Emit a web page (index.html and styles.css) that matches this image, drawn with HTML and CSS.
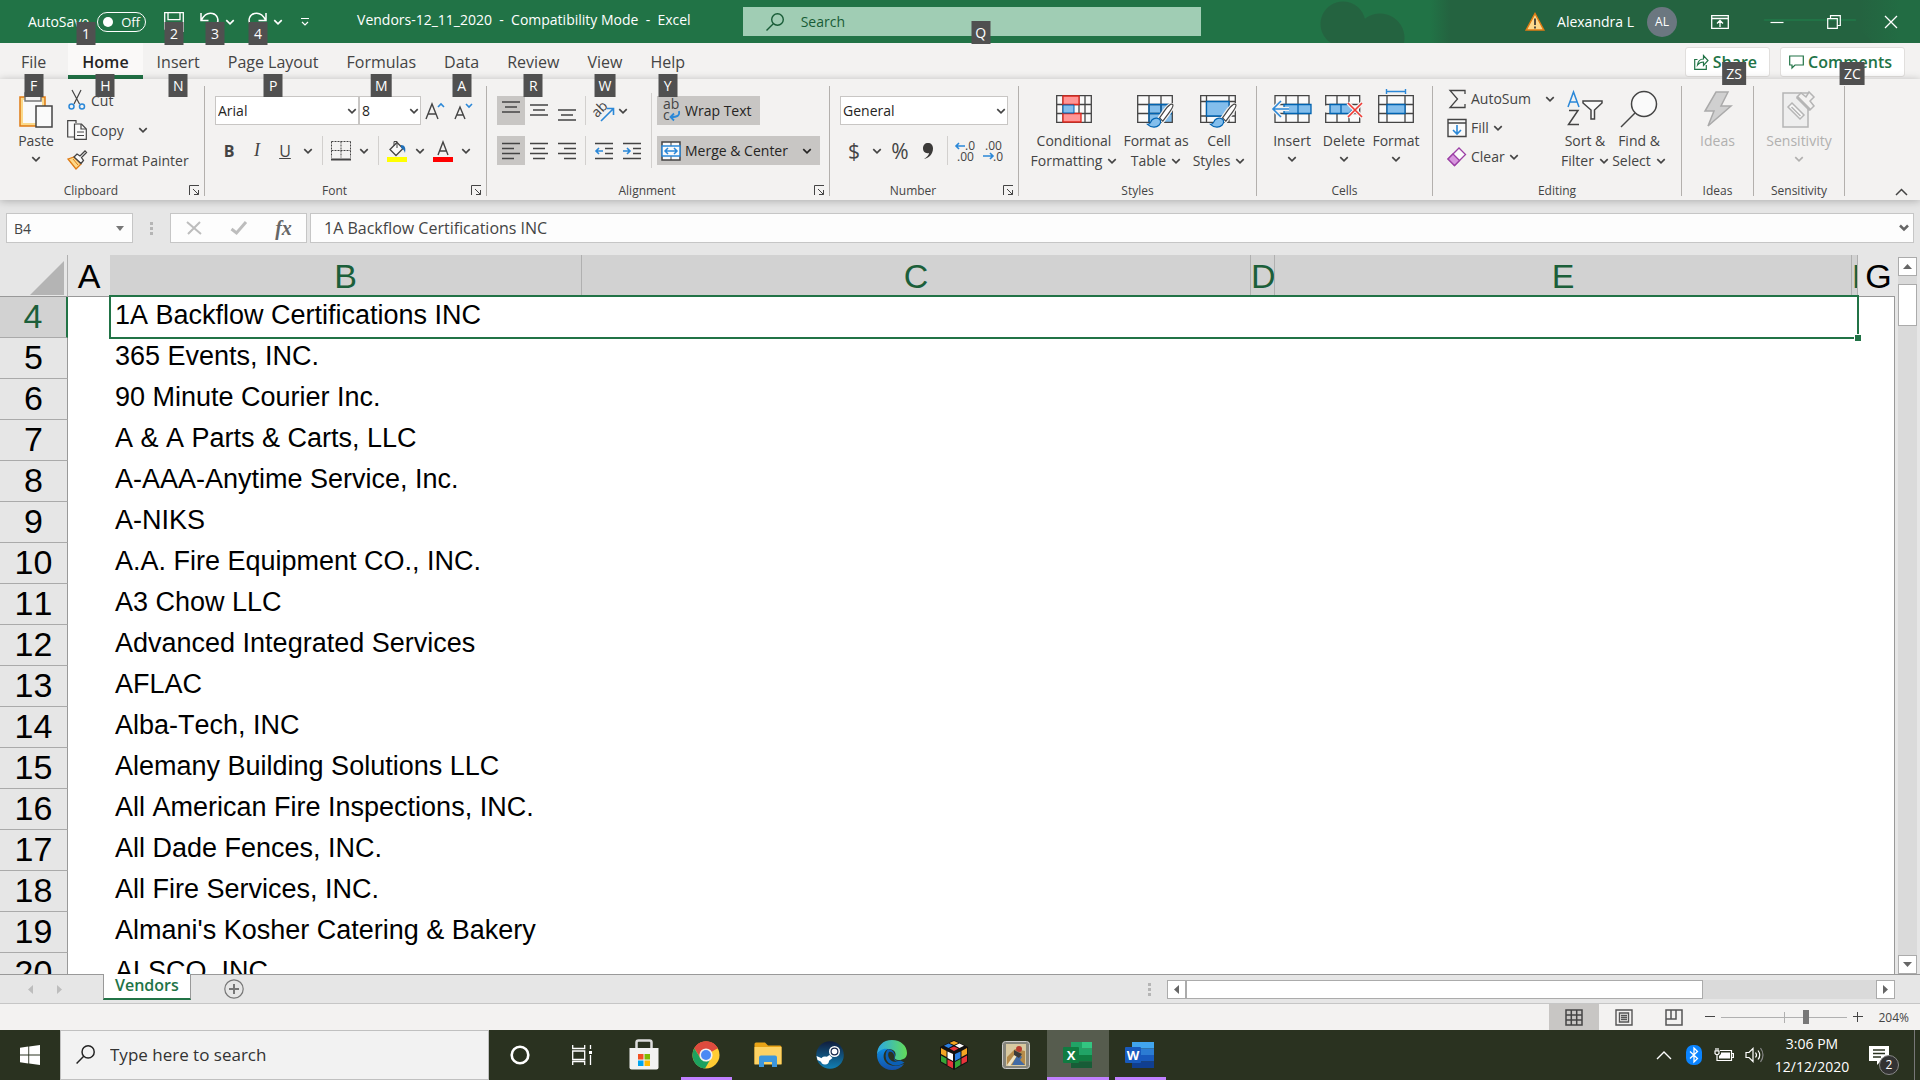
FILE: index.html
```html
<!DOCTYPE html>
<html lang="en">
<head>
    <meta charset="UTF-8">
    <meta name="viewport" content="width=device-width, initial-scale=1.0">
    <title>Vendors-12_11_2020 - Compatibility Mode - Excel</title>
    <link rel="stylesheet" href="styles.css">
</head>
<body>
    <!-- shared icons -->
    <svg class="defs" width="0" height="0">
        <symbol id="chev" viewBox="0 0 8 8"><path d="M1 2.5l3 3 3-3" fill="none" stroke="currentColor" stroke-width="1.3"/></symbol>
        <symbol id="launch" viewBox="0 0 11 11"><path d="M.5 10V.5H10M4 4l5.500 5.500M9.500 5v4.500H5" fill="none" stroke="currentColor"/></symbol>
        <symbol id="glass" viewBox="0 0 20 20"><circle cx="12.500" cy="7.500" r="5.800" fill="none" stroke="currentColor" stroke-width="1.400"/><path d="M8.300 11.700L1.500 18.500" stroke="currentColor" stroke-width="1.400"/></symbol>
        <symbol id="brush" viewBox="0 0 30 28"><path d="M28 1.500c-2-1-5 2-8 6l-6 8.500 3.500 3.500 7-9.500c3-4 5-7 3.500-8.500z" fill="#fff" stroke="#f3f2f1" stroke-width="4"/><path d="M28 1.500c-2-1-5 2-8 6l-6 8.500 3.500 3.500 7-9.500c3-4 5-7 3.500-8.500z" fill="#fff" stroke="#444" stroke-width="1.300"/><path d="M1 23c4 0 3-3 5-5 3-3 8-2 9 1 1 4-3 7-7 7-3 0-5-1-7-3z" fill="#83beec" stroke="#0063b1" stroke-width="1.300"/></symbol>
    </svg>

    <header class="titlebar">
        <label class="autosave tip-host">AutoSave
            <span class="switch"><input type="checkbox">Off</span>
            <kbd class="tip tip-autosave">1</kbd>
        </label>
        <div class="quick">
            <button class="tip-host" aria-label="Save">
                <svg width="20" height="20" viewBox="0 0 20 20" fill="none" stroke="#fff" stroke-width="1.300"><path d="M.7.7h18.600v18.600H3L.7 17zM4 .7v7h12v-7M5 19v-7h10v7"/></svg>
                <kbd class="tip">2</kbd>
            </button>
            <button class="tip-host undo" aria-label="Undo">
                <svg width="20" height="20" viewBox="0 0 20 20" fill="none" stroke="#fff" stroke-width="1.500"><path d="M1 1v7.500h7.500M1.500 8C4 3 8 .5 12.500 1.500c5 1 7 7 4 11L10 19"/></svg>
                <kbd class="tip">3</kbd>
            </button>
            <button class="mini" aria-label="Undo list"><svg class="chev"><use href="#chev"/></svg></button>
            <button class="tip-host redo" aria-label="Redo">
                <svg width="20" height="20" viewBox="0 0 20 20" fill="none" stroke="#fff" stroke-width="1.500"><path d="M18 1v7.500h-7.500M17.500 8C15 3 11 .5 6.500 1.500c-5 1-7 7-4 11L9 19"/></svg>
                <kbd class="tip">4</kbd>
            </button>
            <button class="mini" aria-label="Redo list"><svg class="chev"><use href="#chev"/></svg></button>
            <button class="customize" aria-label="Customize toolbar"><svg width="10" height="10" viewBox="0 0 10 10" fill="none" stroke="#fff" stroke-width="1.200"><path d="M1 1.500h8M2 5l3 3 3-3"/></svg></button>
        </div>
        <h1 class="doc-title">Vendors-12_11_2020&nbsp; -&nbsp; Compatibility Mode&nbsp; -&nbsp; Excel</h1>
        <div class="search tip-host">
            <svg width="20" height="20"><use href="#glass"/></svg>
            <input type="text" placeholder="Search" aria-label="Search">
            <kbd class="tip tip-search">Q</kbd>
        </div>
        <div class="account">
            <svg width="20" height="20" viewBox="0 0 20 20"><path d="M10 1.500L18.800 18H1.200z" fill="#fcd98c" stroke="#e07b13" stroke-width="1.500"/><path d="M10 6.500v6.500M10 14.500v2" stroke="#333" stroke-width="1.700"/></svg>
            <span class="user">Alexandra L</span>
            <span class="avatar">AL</span>
        </div>
        <div class="window-buttons">
            <button aria-label="Ribbon display options"><svg width="18" height="14" viewBox="0 0 18 14" fill="none" stroke="#fff" stroke-width="1.300"><path d="M.7.7h16.600v12.600H.7zM.7 3.500h16.600M9 12V6M6 8.500l3-3 3 3"/></svg></button>
            <button aria-label="Minimize"><svg width="14" height="14" viewBox="0 0 14 14" stroke="#fff" stroke-width="1.200"><path d="M.5 7.500h13"/></svg></button>
            <button aria-label="Restore"><svg width="14" height="14" viewBox="0 0 14 14" fill="none" stroke="#fff" stroke-width="1.200"><path d="M.7 3.700h9.600v9.600H.7zM3.500 3.500V.7h9.800v9.800h-2.800"/></svg></button>
            <button aria-label="Close"><svg width="14" height="14" viewBox="0 0 14 14" stroke="#fff" stroke-width="1.300"><path d="M1 1l12 12M13 1L1 13"/></svg></button>
        </div>
    </header>

    <nav class="tabs">
        <button class="tip-host file">File<kbd class="tip">F</kbd></button>
        <button class="tip-host active">Home<kbd class="tip">H</kbd></button>
        <button class="tip-host">Insert<kbd class="tip">N</kbd></button>
        <button class="tip-host">Page Layout<kbd class="tip">P</kbd></button>
        <button class="tip-host">Formulas<kbd class="tip">M</kbd></button>
        <button class="tip-host">Data<kbd class="tip">A</kbd></button>
        <button class="tip-host">Review<kbd class="tip">R</kbd></button>
        <button class="tip-host">View<kbd class="tip">W</kbd></button>
        <button class="tip-host">Help<kbd class="tip">Y</kbd></button>
        <div class="tab-actions">
            <button class="tip-host">
                <svg width="15" height="16" viewBox="0 0 15 16" fill="none" stroke="#217346" stroke-width="1.200"><path d="M3.500 5.500H.7v9.800h11.600V11M3.500 11C4 7 6 5 9.500 5V1.500L14 6.500l-4.500 5V8C7 8 5 9 3.500 11z"/></svg>
                Share<kbd class="tip">ZS</kbd>
            </button>
            <button class="tip-host">
                <svg width="15" height="16" viewBox="0 0 15 16" fill="none" stroke="#217346" stroke-width="1.200"><path d="M.7 2h13.600v9H6l-3 3v-3H.7z"/></svg>
                Comments<kbd class="tip">ZC</kbd>
            </button>
        </div>
    </nav>

    <section class="ribbon">
        <div class="group g-clipboard">
            <div class="group-body">
                <button class="big w-paste">
                    <span class="big-icon"><svg width="36" height="36" viewBox="0 0 36 36"><path d="M2 6h25v29H2z" fill="#fbd98a" stroke="#e07b13" stroke-width="1.500"/><path d="M5 9h19v23H5z" fill="#fafafa"/><path d="M7 2h16v8H7z" fill="#f3f2f1" stroke="#777" stroke-width="1.500"/><path d="M18 15h16v21H18z" fill="#fafafa" stroke="#444" stroke-width="1.500"/></svg></span>
                    Paste<svg class="chev"><use href="#chev"/></svg>
                </button>
                <div class="small-list">
                    <button><svg width="20" height="20" viewBox="0 0 20 20" fill="none" stroke="#444" stroke-width="1.200"><path d="M5 0l7.500 14M14 0L7 14"/><circle cx="4.500" cy="16.500" r="2.500" stroke="#2b88d8" stroke-width="1.500"/><circle cx="15" cy="16.500" r="2.500" stroke="#2b88d8" stroke-width="1.500"/></svg>Cut</button>
                    <button><svg width="20" height="20" viewBox="0 0 20 20" fill="#fafafa" stroke="#444" stroke-width="1.200"><path d="M7 17H.7V.7H9V3M7.500 4h7L19.300 9v10.300H7.500z"/><path d="M14 4v5h5M10 12h7M10 15.500h7" fill="none"/></svg>Copy<svg class="chev far"><use href="#chev"/></svg></button>
                    <button><svg width="20" height="20" viewBox="0 0 20 20"><path d="M1 9l6-2 7 7-5 5z" fill="#fcd98c" stroke="#e07b13" stroke-width="1.300"/><path d="M3 12l4 4M6 9l5 6" stroke="#e07b13"/><path d="M7 7l3-3 3 2 5-5 1.500 1.500-5 5 2 3-2.500 3z" fill="#fafafa" stroke="#444" stroke-width="1.300"/></svg>Format Painter</button>
                </div>
            </div>
            <div class="group-label has-launch">Clipboard<button class="launch" aria-label="Clipboard settings"><svg width="11" height="11"><use href="#launch"/></svg></button></div>
        </div>

        <div class="group g-font">
            <div class="group-body rows">
                <div class="row">
                    <span class="combo font-name"><select aria-label="Font"><option>Arial</option></select><svg class="chev"><use href="#chev"/></svg></span>
                    <span class="combo font-size"><select aria-label="Font size"><option>8</option></select><svg class="chev"><use href="#chev"/></svg></span>
                    <button class="ib" aria-label="Increase font size"><svg width="20" height="20" viewBox="0 0 20 20" fill="none"><path d="M1 18L7 3l6 15M3 13h8" stroke="#444" stroke-width="1.400"/><path d="M13 6l3-3 3 3" stroke="#2b88d8" stroke-width="1.600"/></svg></button>
                    <button class="ib" aria-label="Decrease font size"><svg width="20" height="20" viewBox="0 0 20 20" fill="none"><path d="M2 18L7 6l5 12M4 14h6" stroke="#444" stroke-width="1.400"/><path d="M13 3l3 3 3-3" stroke="#2b88d8" stroke-width="1.600"/></svg></button>
                </div>
                <div class="row">
                    <button class="ib glyph"><b>B</b></button>
                    <button class="ib glyph"><i>I</i></button>
                    <button class="ib glyph"><u>U</u></button>
                    <button class="drop" aria-label="Underline styles"><svg class="chev"><use href="#chev"/></svg></button>
                    <span class="vsep"></span>
                    <button class="ib" aria-label="Borders"><svg width="20" height="20" viewBox="0 0 20 20" fill="none" stroke="#444"><path d="M.5.500h19M.5 9.500h19M.5.500v16M10 .5v16M19.500.500v16" stroke-dasharray="2 1"/><path d="M0 18.500h20" stroke-width="2"/></svg></button>
                    <button class="drop" aria-label="Border styles"><svg class="chev"><use href="#chev"/></svg></button>
                    <span class="vsep"></span>
                    <button class="ib" aria-label="Fill color"><svg width="22" height="22" viewBox="0 0 22 22"><path d="M4 9.500L11 2.500l6 6-7 7z" fill="#fafafa" stroke="#444" stroke-width="1.300"/><path d="M8 6V1.500h3V8" fill="none" stroke="#444"/><path d="M15 5c4 0 5 3 4 8-1-3-2-4-4-5z" fill="#1f6fb8"/><path d="M1 17h20v5H1z" fill="#ff0"/></svg></button>
                    <button class="drop" aria-label="Fill colors"><svg class="chev"><use href="#chev"/></svg></button>
                    <button class="ib" aria-label="Font color"><svg width="22" height="22" viewBox="0 0 22 22"><path d="M6 15l5-13 5 13M7.500 11h7" fill="none" stroke="#444" stroke-width="1.400"/><path d="M1 17h20v5H1z" fill="red"/></svg></button>
                    <button class="drop" aria-label="Font colors"><svg class="chev"><use href="#chev"/></svg></button>
                </div>
            </div>
            <div class="group-label has-launch">Font<button class="launch" aria-label="Font settings"><svg width="11" height="11"><use href="#launch"/></svg></button></div>
        </div>

        <div class="group g-align">
            <div class="group-body">
                <div class="rows">
                    <div class="row">
                        <button class="ib on" aria-label="Top align"><svg width="18" height="20" viewBox="0 0 18 20" stroke="#444" stroke-width="1.400"><path d="M0 1h18M3 6h12M0 11h18"/></svg></button>
                        <button class="ib" aria-label="Middle align"><svg width="18" height="20" viewBox="0 0 18 20" stroke="#444" stroke-width="1.400"><path d="M0 4h18M3 9h12M0 14h18"/></svg></button>
                        <button class="ib" aria-label="Bottom align"><svg width="18" height="20" viewBox="0 0 18 20" stroke="#444" stroke-width="1.400"><path d="M0 9h18M3 14h12M0 19h18"/></svg></button>
                        <span class="vsep tight"></span>
                        <button class="ib" aria-label="Orientation"><svg width="22" height="22" viewBox="0 0 22 22"><text x="0" y="15" transform="rotate(-45 6 12)" class="icon-text large">ab</text><path d="M8 21L20 9M14 8.500h6.500V15" fill="none" stroke="#2b88d8" stroke-width="1.600"/></svg></button>
                        <button class="drop narrow" aria-label="Orientation list"><svg class="chev"><use href="#chev"/></svg></button>
                    </div>
                    <div class="row">
                        <button class="ib on" aria-label="Align left"><svg width="18" height="18" viewBox="0 0 18 18" stroke="#444" stroke-width="1.400"><path d="M0 1.500h18M0 6.500h12M0 11.500h18M0 16.500h12"/></svg></button>
                        <button class="ib" aria-label="Center"><svg width="18" height="18" viewBox="0 0 18 18" stroke="#444" stroke-width="1.400"><path d="M0 1.500h18M3 6.500h12M0 11.500h18M3 16.500h12"/></svg></button>
                        <button class="ib" aria-label="Align right"><svg width="18" height="18" viewBox="0 0 18 18" stroke="#444" stroke-width="1.400"><path d="M0 1.500h18M6 6.500h12M0 11.500h18M6 16.500h12"/></svg></button>
                        <span class="vsep tight"></span>
                        <button class="ib" aria-label="Decrease indent"><svg width="18" height="18" viewBox="0 0 18 18" fill="none" stroke="#444" stroke-width="1.400"><path d="M0 1.500h18M10 6.500h8M10 11.500h8M0 16.500h18"/><path d="M8 9H1M4 6L1 9l3 3" stroke="#2b88d8" stroke-width="1.600"/></svg></button>
                        <button class="ib" aria-label="Increase indent"><svg width="18" height="18" viewBox="0 0 18 18" fill="none" stroke="#444" stroke-width="1.400"><path d="M0 1.500h18M10 6.500h8M10 11.500h8M0 16.500h18"/><path d="M0 9h7M4 6l3 3-3 3" stroke="#2b88d8" stroke-width="1.600"/></svg></button>
                    </div>
                </div>
                <span class="vsep long"></span>
                <div class="rows">
                    <div class="row"><button class="labelled on"><svg width="20" height="22" viewBox="0 0 20 22"><text x="2" y="9" class="icon-text large">ab</text><text x="2" y="20" class="icon-text large">c</text><path d="M18 11c1 5-2 6-8 6M13 13.500L9.500 17l3.500 3.500" fill="none" stroke="#2b88d8" stroke-width="1.800"/></svg>Wrap Text</button></div>
                    <div class="row"><button class="labelled on"><svg width="20" height="20" viewBox="0 0 20 20"><path d="M1 1h18v18H1z" fill="#fafafa" stroke="#444" stroke-width="1.500"/><path d="M10 1v18" stroke="#444"/><path d="M1 5h18v10H1z" fill="#fafafa" stroke="#2b88d8" stroke-width="1.500"/><path d="M4 10h12M7 7l-3 3 3 3M13 7l3 3-3 3" fill="none" stroke="#2b88d8" stroke-width="1.500"/></svg>Merge &amp; Center<svg class="chev"><use href="#chev"/></svg></button></div>
                </div>
            </div>
            <div class="group-label has-launch">Alignment<button class="launch" aria-label="Alignment settings"><svg width="11" height="11"><use href="#launch"/></svg></button></div>
        </div>

        <div class="group g-number">
            <div class="group-body rows">
                <div class="row"><span class="combo number-format"><select aria-label="Number format"><option>General</option></select><svg class="chev"><use href="#chev"/></svg></span></div>
                <div class="row">
                    <button class="ib sign">$</button>
                    <button class="drop" aria-label="Currency list"><svg class="chev"><use href="#chev"/></svg></button>
                    <button class="ib sign">%</button>
                    <button class="ib" aria-label="Comma style"><svg width="12" height="18" viewBox="0 0 12 18"><path d="M6 1c3 0 5 2 5 5.500C11 12 7 16 2 17c3-2 5-4 5-6-4 1-6-2-6-4.500C1 3 3 1 6 1z" fill="#3b3a39"/></svg></button>
                    <span class="vsep"></span>
                    <button class="ib" aria-label="Increase decimal"><svg width="22" height="22" viewBox="0 0 22 22"><text x="10" y="10" class="icon-text">.0</text><text x="2" y="21" class="icon-text">.00</text><path d="M10 6H1M4 3L1 6l3 3" fill="none" stroke="#2b88d8" stroke-width="1.600"/></svg></button>
                    <button class="ib" aria-label="Decrease decimal"><svg width="22" height="22" viewBox="0 0 22 22"><text x="2" y="10" class="icon-text">.00</text><text x="10" y="21" class="icon-text">.0</text><path d="M0 16h10M7 13l3 3-3 3" fill="none" stroke="#2b88d8" stroke-width="1.600"/></svg></button>
                </div>
            </div>
            <div class="group-label has-launch">Number<button class="launch" aria-label="Number settings"><svg width="11" height="11"><use href="#launch"/></svg></button></div>
        </div>

        <div class="group g-styles">
            <div class="group-body">
                <button class="big w-cond">
                    <span class="big-icon"><svg width="36" height="28" viewBox="0 0 36 28"><path d="M.7.700h34.600v26.600H.7zM.7 9.500h34.600M.7 18.500h34.600M7 .7v26.600M23 .7v26.600M29 .7v26.600" fill="#fafafa" stroke="#444" stroke-width="1.300"/><path d="M7 1h16v8.500H7zM7 18.500h18V27H7z" fill="#ff9696" stroke="#e0281e" stroke-width="1.300"/><path d="M7 10h11v8H7z" fill="#83beec" stroke="#0063b1"/></svg></span>
                    Conditional<span>Formatting <svg class="chev"><use href="#chev"/></svg></span>
                </button>
                <button class="big w-table">
                    <span class="big-icon"><svg width="38" height="36" viewBox="0 -4 38 36"><path d="M.7.700h34.600v26.600H.7z" fill="#fafafa"/><path d="M12 9.500h23V27H12z" fill="#83beec"/><path d="M.7.700h34.600v26.600H.7zM.7 9.500h34.600M.7 18.500h34.600M12 .7v26.600M24 .7v26.600" fill="none" stroke="#444" stroke-width="1.300"/><path d="M12 27V9.500h23M24 10v17M12 18.500h23" fill="none" stroke="#0063b1" stroke-width="1.300"/><use href="#brush" x="9" y="8" width="29" height="26"/></svg></span>
                    Format as<span>Table <svg class="chev"><use href="#chev"/></svg></span>
                </button>
                <button class="big w-cell">
                    <span class="big-icon"><svg width="38" height="36" viewBox="0 -4 38 36"><path d="M.7.700h34.600v26.600H.7zM.7 6.500h34.600M.7 21h34.600M6.500.700v26.600M29 .7v26.600" fill="#fafafa" stroke="#444" stroke-width="1.300"/><path d="M6.500 6.500H29V21H6.500z" fill="#83beec" stroke="#0063b1" stroke-width="1.300"/><use href="#brush" x="9" y="8" width="29" height="26"/></svg></span>
                    Cell<span>Styles <svg class="chev"><use href="#chev"/></svg></span>
                </button>
            </div>
            <div class="group-label">Styles</div>
        </div>

        <div class="group g-cells">
            <div class="group-body">
                <button class="big w-cells">
                    <span class="big-icon"><svg width="40" height="28" viewBox="0 0 40 28"><path d="M3 .7h34v26.600H3zM14 .7v26.600M26 .7v26.600M3 9.500h34M3 18.500h34" fill="#fafafa" stroke="#444" stroke-width="1.300"/><path d="M12 9.500h27v9H12zM26 9.500v9" fill="#83beec" stroke="#0063b1" stroke-width="1.300"/><path d="M17 14H1M9 6l-8 8 8 8" fill="none" stroke="#f3f2f1" stroke-width="4"/><path d="M17 14H1M9 6l-8 8 8 8" fill="none" stroke="#2b88d8" stroke-width="1.600"/></svg></span>
                    Insert<svg class="chev"><use href="#chev"/></svg>
                </button>
                <button class="big w-cells">
                    <span class="big-icon"><svg width="38" height="28" viewBox="0 0 38 28"><path d="M.7.700h34v26.600h-34zM12 .7v26.600M24 .7v26.600M.7 9.500h34M.7 18.500h34" fill="#fafafa" stroke="#444" stroke-width="1.300"/><path d="M0 10.500h6v7H0z" fill="#f3f2f1"/><path d="M5 9.500h19l4 4.500-4 4.500H5zM16 9.500v9" fill="#83beec" stroke="#0063b1" stroke-width="1.300"/><path d="M23 8l14 14M37 8L23 22" stroke="#f3f2f1" stroke-width="4"/><path d="M23 8l14 14M37 8L23 22" stroke="#f03a34" stroke-width="1.600"/></svg></span>
                    Delete<svg class="chev"><use href="#chev"/></svg>
                </button>
                <button class="big w-cells">
                    <span class="big-icon"><svg width="36" height="40" viewBox="0 0 36 40"><path d="M8 2.500h20M8.500 0v5M27.500 0v5" stroke="#2b88d8" stroke-width="1.400"/><path d="M.7 6.700h34.600v26.600H.7zM9 6.700v26.600M27 6.700v26.600M.7 15.500h34.600M.7 24.500h34.600" fill="#fafafa" stroke="#444" stroke-width="1.300"/><path d="M9 15.500h18v9H9z" fill="#83beec" stroke="#0063b1" stroke-width="1.300"/></svg></span>
                    Format<svg class="chev"><use href="#chev"/></svg>
                </button>
            </div>
            <div class="group-label">Cells</div>
        </div>

        <div class="group g-editing">
            <div class="group-body">
                <div class="small-list edit-list">
                    <button><svg width="20" height="20" viewBox="0 0 20 20" fill="none" stroke="#444" stroke-width="1.300"><path d="M18 5V1.500H3L10.500 10 3 18.500h15V15"/></svg>AutoSum<svg class="chev far"><use href="#chev"/></svg></button>
                    <button><svg width="20" height="20" viewBox="0 0 20 20" fill="#fafafa" stroke="#444" stroke-width="1.400"><path d="M1 1.500h18v17H1zM1 5h18"/><path d="M10 7v9M6 12l4 4 4-4" fill="none" stroke="#2b88d8" stroke-width="1.600"/></svg>Fill <svg class="chev"><use href="#chev"/></svg></button>
                    <button><svg width="20" height="20" viewBox="0 0 20 20" stroke="#9b3fa5" stroke-width="1.300"><path d="M1 12L12 1l6.500 6.500L7.500 18.500z" fill="#fafafa"/><path d="M1 12l5-5 6.500 6.500-5 5z" fill="#d796de"/></svg>Clear <svg class="chev"><use href="#chev"/></svg></button>
                </div>
                <button class="big w-cell">
                    <span class="big-icon"><svg width="36" height="36" viewBox="0 0 36 36" fill="none" stroke-width="1.500"><path d="M1 16L6.500 1 12 16M3 11h7" stroke="#2b88d8"/><path d="M2 19.500h9L1.500 33.500H12" stroke="#444"/><path d="M16 10h19v2l-7.500 7v9H24v-9l-8-7z" fill="#fafafa" stroke="#444"/></svg></span>
                    Sort &amp;<span>Filter <svg class="chev"><use href="#chev"/></svg></span>
                </button>
                <button class="big w-cell">
                    <span class="big-icon"><svg width="38" height="38" viewBox="0 0 38 38" stroke="#444" stroke-width="1.500"><circle cx="24" cy="14" r="12.500" fill="#fafafa"/><path d="M15 23L1 37"/></svg></span>
                    Find &amp;<span>Select <svg class="chev"><use href="#chev"/></svg></span>
                </button>
            </div>
            <div class="group-label">Editing</div>
        </div>

        <div class="group g-ideas">
            <div class="group-body">
                <button class="big" disabled>
                    <span class="big-icon"><svg width="28" height="36" viewBox="0 0 28 36"><path d="M12 1h12l-7 14h10L4 35l6-15H1z" fill="#d0d0d0" stroke="#aaa" stroke-width="1.500"/></svg></span>
                    Ideas
                </button>
            </div>
            <div class="group-label">Ideas</div>
        </div>

        <div class="group g-sens">
            <div class="group-body">
                <button class="big" disabled>
                    <span class="big-icon"><svg width="34" height="38" viewBox="0 0 34 38" fill="#eee" stroke="#b5b5b5" stroke-width="1.500"><path d="M1 3h25v34H1z"/><path d="M6 17l4-4 12 12-4 4zM9.500 17l9 9" fill="#f8f8f8"/><path d="M15 7l4-4 5 4 3-5 5 5-4 4 4 5-4 4z" fill="#f3f2f1"/><path d="M15 7l13 13" stroke-width="3"/></svg></span>
                    Sensitivity<svg class="chev"><use href="#chev"/></svg>
                </button>
            </div>
            <div class="group-label">Sensitivity</div>
        </div>
        <button class="collapse" aria-label="Collapse the ribbon"><svg width="13" height="8" viewBox="0 0 13 8" fill="none" stroke="#444" stroke-width="1.500"><path d="M1 7l5.500-5.500L12 7"/></svg></button>
    </section>

    <section class="formula-bar">
        <div class="name-box">
            <input type="text" value="B4" aria-label="Name box">
            <svg width="8" height="5" viewBox="0 0 8 5"><path d="M0 0h8L4 5z" fill="#777"/></svg>
        </div>
        <span class="grip"></span>
        <div class="fx-buttons">
            <button aria-label="Cancel"><svg width="16" height="14" viewBox="0 0 16 14" stroke="#bdbdbd" stroke-width="2"><path d="M1 1l14 12M14 1L2 13"/></svg></button>
            <button aria-label="Enter"><svg width="18" height="14" viewBox="0 0 18 14" fill="none" stroke="#bdbdbd" stroke-width="3"><path d="M1.500 8l5 4L16 1"/></svg></button>
            <button class="fx">fx</button>
        </div>
        <div class="formula">
            <input type="text" value="1A Backflow Certifications INC" aria-label="Formula">
            <svg width="10" height="8" viewBox="0 0 10 8" fill="none" stroke="#666" stroke-width="2.500"><path d="M1 1.500l4 4 4-4"/></svg>
        </div>
    </section>

    <main class="sheet">
        <div class="grid">
            <table>
                <colgroup>
                    <col class="c-head"><col class="c-a"><col class="c-b"><col class="c-c"><col class="c-d"><col><col class="c-f"><col class="c-g">
                </colgroup>
                <thead>
                    <tr>
                        <th class="corner" aria-label="Select all"><svg width="34" height="34" viewBox="0 0 34 34"><path d="M34 0v34H0z" fill="#b4b4b4"/></svg></th>
                        <th>A</th><th class="sel">B</th><th class="sel">C</th><th class="sel">D</th><th class="sel">E</th><th class="sel cut">F</th><th>G</th>
                    </tr>
                </thead>
                <tbody>
                    <tr class="current"><th>4</th><td></td><td class="picked" colspan="5">1A Backflow Certifications INC</td><td></td></tr>
                    <tr><th>5</th><td></td><td colspan="5">365 Events, INC.</td><td></td></tr>
                    <tr><th>6</th><td></td><td colspan="5">90 Minute Courier Inc.</td><td></td></tr>
                    <tr><th>7</th><td></td><td colspan="5">A &amp; A Parts &amp; Carts, LLC</td><td></td></tr>
                    <tr><th>8</th><td></td><td colspan="5">A-AAA-Anytime Service, Inc.</td><td></td></tr>
                    <tr><th>9</th><td></td><td colspan="5">A-NIKS</td><td></td></tr>
                    <tr><th>10</th><td></td><td colspan="5">A.A. Fire Equipment CO., INC.</td><td></td></tr>
                    <tr><th>11</th><td></td><td colspan="5">A3 Chow LLC</td><td></td></tr>
                    <tr><th>12</th><td></td><td colspan="5">Advanced Integrated Services</td><td></td></tr>
                    <tr><th>13</th><td></td><td colspan="5">AFLAC</td><td></td></tr>
                    <tr><th>14</th><td></td><td colspan="5">Alba-Tech, INC</td><td></td></tr>
                    <tr><th>15</th><td></td><td colspan="5">Alemany Building Solutions LLC</td><td></td></tr>
                    <tr><th>16</th><td></td><td colspan="5">All American Fire Inspections, INC.</td><td></td></tr>
                    <tr><th>17</th><td></td><td colspan="5">All Dade Fences, INC.</td><td></td></tr>
                    <tr><th>18</th><td></td><td colspan="5">All Fire Services, INC.</td><td></td></tr>
                    <tr><th>19</th><td></td><td colspan="5">Almani's Kosher Catering &amp; Bakery</td><td></td></tr>
                    <tr><th>20</th><td></td><td colspan="5">ALSCO, INC</td><td></td></tr>
                </tbody>
            </table>
        </div>
        <div class="vscroll">
            <button aria-label="Scroll up"><svg width="9" height="5" viewBox="0 0 9 5"><path d="M0 5h9L4.500 0z" fill="#666"/></svg></button>
            <span class="thumb"></span>
            <button class="down" aria-label="Scroll down"><svg width="9" height="5" viewBox="0 0 9 5"><path d="M0 0h9L4.500 5z" fill="#666"/></svg></button>
        </div>
    </main>

    <div class="sheet-bar">
        <div class="sheet-nav">
            <button aria-label="Previous sheet"><svg width="5" height="9" viewBox="0 0 5 9"><path d="M5 0v9L0 4.500z" fill="#bdbdbd"/></svg></button>
            <button aria-label="Next sheet"><svg width="5" height="9" viewBox="0 0 5 9"><path d="M0 0v9l5-4.500z" fill="#bdbdbd"/></svg></button>
        </div>
        <button class="sheet-tab">Vendors</button>
        <button class="add-sheet" aria-label="New sheet"><svg width="20" height="20" viewBox="0 0 20 20" fill="none" stroke="#777"><circle cx="10" cy="10" r="9.200" stroke-width="1.200"/><path d="M10 5v10M5 10h10" stroke-width="2"/></svg></button>
        <span class="grip"></span>
        <div class="hscroll">
            <button aria-label="Scroll left"><svg width="5" height="9" viewBox="0 0 5 9"><path d="M5 0v9L0 4.500z" fill="#666"/></svg></button>
            <span class="thumb"></span>
            <button class="right" aria-label="Scroll right"><svg width="5" height="9" viewBox="0 0 5 9"><path d="M0 0v9l5-4.500z" fill="#666"/></svg></button>
        </div>
    </div>

    <div class="status-bar">
        <button class="view on" aria-label="Normal"><svg width="18" height="17" viewBox="0 0 18 17" fill="none" stroke="#444" stroke-width="1.500"><path d="M1 1h16v15H1zM6.300 1v15M11.700 1v15M1 6h16M1 11h16"/></svg></button>
        <button class="view" aria-label="Page layout"><svg width="18" height="17" viewBox="0 0 18 17" fill="none" stroke="#555" stroke-width="1.400"><path d="M1 1h16v15H1zM4.500 4h9v9h-9zM6 6.500h6M6 8.500h6M6 10.500h6"/></svg></button>
        <button class="view" aria-label="Page break preview"><svg width="18" height="17" viewBox="0 0 18 17" fill="none" stroke="#555" stroke-width="1.500"><path d="M1 1h16v15H1zM1 10h10V1M6 1v9"/></svg></button>
        <button class="zoom-btn" aria-label="Zoom out"><svg width="10" height="10" viewBox="0 0 10 10" stroke="#444"><path d="M0 4.500h10"/></svg></button>
        <input class="zoom" type="range" min="0" max="100" value="68" aria-label="Zoom">
        <button class="zoom-btn" aria-label="Zoom in"><svg width="10" height="10" viewBox="0 0 10 10" stroke="#444"><path d="M0 4.500h10M4.500 0v10"/></svg></button>
        <span class="zoom-value">204%</span>
    </div>

    <footer class="taskbar">
        <button class="start" aria-label="Start"><svg width="20" height="20" viewBox="0 0 20 20" fill="#fff"><path d="M0 2.700L8.300 1.600v7.900H0zM9.200 1.500L20 0v9.500H9.200zM0 10.400h8.300v8L0 17.300zM9.200 10.400H20V20L9.200 18.500z"/></svg></button>
        <label class="task-search"><svg width="21" height="21"><use href="#glass"/></svg><input type="text" placeholder="Type here to search" aria-label="Type here to search"></label>
        <div class="apps">
            <button aria-label="Cortana"><svg width="20" height="20" viewBox="0 0 20 20"><circle cx="10" cy="10" r="8.300" fill="none" stroke="#fff" stroke-width="2.600"/></svg></button>
            <button aria-label="Task view"><svg width="20" height="20" viewBox="0 0 20 20" fill="none" stroke="#fff" stroke-width="1.300"><path d="M.7 0v3.500h12V0M.7 6h12v8.500H.7zM.7 20v-3.500h12V20M18.500 0v4M18.500 10v10"/><path d="M17 6h3v3h-3z" fill="#fff" stroke="none"/></svg></button>
            <button aria-label="Microsoft Store"><svg width="30" height="32" viewBox="0 0 30 32"><path d="M7.500 10V3.500Q7.500 1.500 9.500 1.500h11q2 0 2 2V10" fill="none" stroke="#ddd" stroke-width="2.500"/><path d="M.5 9h29v19.500q0 2-2 2h-25q-2 0-2-2z" fill="#f2f2f2"/><path d="M9 15h5.500v5.500H9z" fill="#f25022"/><path d="M15.500 15H21v5.500h-5.500z" fill="#7fba00"/><path d="M9 21.500h5.500V27H9z" fill="#00a4ef"/><path d="M15.500 21.500H21V27h-5.500z" fill="#ffb900"/></svg></button>
            <button class="running" aria-label="Chrome"><svg width="28" height="28" viewBox="0 0 28 28"><circle cx="14" cy="14" r="13.500" fill="#fc3"/><path d="M14 14L2.300 7.200A13.500 13.500 0 0 1 25.700 7.200z" fill="#dd4b3e"/><path d="M14 7.500h12A13.500 13.500 0 0 0 2.300 7.200L8.400 17z" fill="#dd4b3e"/><path d="M2.300 7.200L8.400 17.200 14 20.500l-2.500 6.800A13.500 13.500 0 0 1 2.300 7.200z" fill="#1da15f"/><path d="M8 17l6 3.500 4-1.500-5 8.400-4-.8z" fill="#1da15f"/><circle cx="14" cy="14" r="6.600" fill="#f1f1f1"/><circle cx="14" cy="14" r="5" fill="#4a8af4"/></svg></button>
            <button aria-label="File Explorer"><svg width="28" height="26" viewBox="0 0 28 26"><path d="M.5 2q0-1.500 1.500-1.500h9l3 3H26q1.500 0 1.500 1.500v17H.5z" fill="#e8a317"/><path d="M.5 5h27v17.500H.5z" fill="#fdd264"/><path d="M5 25V15.500q0-2 2-2h14q2 0 2 2V25h-5v-5h-8v5z" fill="#3c96dc"/></svg></button>
            <button aria-label="Steam"><svg width="28" height="28" viewBox="0 0 28 28"><defs><linearGradient id="steam" x2="0" y2="1"><stop stop-color="#111d3c"/><stop offset="1" stop-color="#1180b4"/></linearGradient></defs><circle cx="14" cy="14" r="13.800" fill="url(#steam)"/><path d="M.5 15l7 3 6-4 3 3-5 4-4 1-6-3z" fill="#fff"/><circle cx="9" cy="19.500" r="4" fill="#fff"/><circle cx="18.500" cy="10.500" r="5.500" fill="#fff"/><circle cx="18.500" cy="10.500" r="3.400" fill="none" stroke="#16264a" stroke-width="1.200"/></svg></button>
            <button aria-label="Edge"><svg width="30" height="30" viewBox="0 0 30 30"><defs><linearGradient id="edge1"><stop stop-color="#2aa7e8"/><stop offset="1" stop-color="#63dd58"/></linearGradient><linearGradient id="edge2" x2="0" y2="1"><stop stop-color="#0d8ce0"/><stop offset="1" stop-color="#1450a8"/></linearGradient></defs><path d="M0 15C0 6 6 0 15 0c9 0 15 6 15 13 0 5-4 7-8 7-3 0-5-1-4-3 2-4-1-8-6-8C6 9 1 12 0 15z" fill="url(#edge1)"/><path d="M0 15c1-4 6-7 11-6-4 2-5 6-4 10 2 6 9 9 20 5-3 4-7 6-12 6C6 30 0 23 0 15z" fill="url(#edge2)"/><path d="M11 9c4 0 8 4 6.500 8.500-1 2 2 4 6 3l4 2C20 28 11 25 9 19c-1-4 0-8 2-10z" fill="#0b5fb5"/><path d="M12 12c3-1 6 2 5 6-1 2 2 4 5 3-5 2-9 0-10.500-4-.5-2-.5-4 .5-5z" fill="#2b3321"/></svg></button>
            <button aria-label="Cube"><svg width="28" height="30" viewBox="0 0 28 30"><path d="M14 0l14 7v15l-14 8-14-8V7z" fill="#111"/><path d="M14 1l4.500 2-4.500 2-4.500-2z" fill="#f5a623"/><path d="M8.500 3.500l4.500 2-4.500 2.500L4 5.800z" fill="#2b7fe0"/><path d="M19.500 3.500l4.500 2.300L19.500 8 15 5.500z" fill="#fff"/><path d="M14 6.500l4.500 2L14 11 9.500 8.500z" fill="#e8353c"/><path d="M1 8l5.500 3v6L1 14z" fill="#f5a623"/><path d="M7.500 11.500L13 14v7l-5.500-3z" fill="#fff"/><path d="M1 15.500l5.500 3v6L1 21.500z" fill="#37a637"/><path d="M7.500 19.500L13 22v6.500l-5.500-3z" fill="#e8353c"/><path d="M15 14l5.500-2.500V18L15 21z" fill="#2b7fe0"/><path d="M21.500 11L27 8v6l-5.500 3z" fill="#f5a623"/><path d="M15 22l5.500-3v6L15 28.500z" fill="#37a637"/><path d="M21.500 18.500l5.500-3v6l-5.500 3z" fill="#e8353c"/></svg></button>
            <button aria-label="Game"><svg width="28" height="28" viewBox="0 0 28 28"><rect x=".5" y=".5" width="27" height="27" rx="3" fill="#85857c" stroke="#ccc"/><path d="M4 3h20v22H4z" fill="#d8c9a0"/><path d="M5 16l8-8 10 2v14H5z" fill="#b58b4a"/><path d="M10 24l6-12 4 4-2 3 5 5z" fill="#426ba5"/><path d="M5 24L15 10l2 2L8 25z" fill="#eee4c4"/><circle cx="17" cy="8" r="3" fill="#b83c2e"/><path d="M12 9l8 4-3 4-5-3z" fill="#3b3a39"/></svg></button>
            <button class="running current" aria-label="Excel"><svg width="30" height="28" viewBox="0 0 30 28"><path d="M8 1h11v13H8z" fill="#21a366"/><path d="M19 1h10v6.500H19z" fill="#33c481"/><path d="M19 7.500h10V14H19z" fill="#21a366"/><path d="M8 14h11v6.500H8z" fill="#107c41"/><path d="M19 14h10v6.500H19z" fill="#107c41"/><path d="M8 20.500h21V27H8z" fill="#185c37"/><rect y="6" width="16" height="16" rx="1" fill="#107c41"/><text x="8" y="19" class="app-letter">X</text></svg></button>
            <button class="running" aria-label="Word"><svg width="30" height="28" viewBox="0 0 30 28"><path d="M7 1h22v6.500H7z" fill="#41a5ee"/><path d="M7 7.500h22V14H7z" fill="#2b7cd3"/><path d="M7 14h22v6.500H7z" fill="#185abd"/><path d="M7 20.500h22V27H7z" fill="#103f91"/><rect y="6" width="16" height="16" rx="1" fill="#185abd"/><text x="8" y="19" class="app-letter">W</text></svg></button>
        </div>
        <div class="tray">
            <button aria-label="Show hidden icons"><svg width="16" height="10" viewBox="0 0 16 10" fill="none" stroke="#fff" stroke-width="1.400"><path d="M1 9l7-7 7 7"/></svg></button>
            <button aria-label="Bluetooth"><svg width="16" height="20" viewBox="0 0 16 20"><rect width="16" height="20" rx="7" fill="#0a84ff"/><path d="M4 6.500l7.500 7L8 17V3l3.500 3.500-7.500 7" fill="none" stroke="#fff" stroke-width="1.300"/></svg></button>
            <button aria-label="Battery"><svg width="20" height="14" viewBox="0 0 20 14" fill="none" stroke="#fff" stroke-width="1.200"><path d="M6 2.500h11.500v10H3V9M17.500 5.500h1.900v4h-1.900M1 3h4v2.500l-1 1H2l-1-1zM2 0v3M4 0v3M3 6.500V9"/><path d="M7 4.500h9v6H5V8l2-2z" fill="#fff" stroke="none"/></svg></button>
            <button aria-label="Volume"><svg width="19" height="16" viewBox="0 0 19 16" fill="none" stroke="#fff" stroke-width="1.200"><path d="M1 5.500h3L8 1.500v13l-4-4H1zM10.500 5.500q2 2.500 0 5M13 3.500q3.500 4.500 0 9"/><path d="M15.500 1q5 7 0 14" stroke="#888"/></svg></button>
            <time class="clock"><span>3:06 PM</span><span>12/12/2020</span></time>
            <button class="notify" aria-label="Notifications"><svg width="20" height="20" viewBox="0 0 20 20"><path d="M0 1h20v15h-8l-4 4v-4H0z" fill="#fff"/><path d="M4 5h12M4 8.500h12M4 12h8" stroke="#2b3321" stroke-width="1.300"/></svg><span class="badge">2</span></button>
        </div>
    </footer>
</body>
</html>
```
FILE: styles.css
```css
* {
    box-sizing: border-box;
}
body {
    margin: 0;
    height: 100vh;
    display: flex;
    flex-direction: column;
    overflow: hidden;
    font-family: "Open Sans", "Noto Sans", sans-serif;
    font-size: 14px;
    color: #444;
    background: #e6e6e6;
}
button, input, select {
    font: inherit;
    color: inherit;
    border: none;
    background: none;
    padding: 0;
    margin: 0;
    border-radius: 0;
    outline: none;
}
button {
    display: flex;
    align-items: center;
    justify-content: center;
    white-space: nowrap;
}
svg {
    display: block;
    flex: none;
    overflow: visible;
}
.defs {
    position: absolute;
}
.chev {
    width: 10px;
    height: 10px;
}
.tip-host {
    position: relative;
}
.tip {
    position: absolute;
    z-index: 5;
    left: 50%;
    top: 31px;
    transform: translateX(-50%);
    min-width: 19px;
    padding: 0 4px;
    line-height: 23px;
    font-family: inherit;
    font-size: 14px;
    font-weight: normal;
    text-align: center;
    color: #fff;
    background: #505050;
}

/* title bar */
.titlebar {
    display: flex;
    align-items: center;
    height: 43px;
    flex: none;
    padding-right: 1px;
    color: #fff;
    background:
        radial-gradient(circle at 1343px 24px, #246340 22px, transparent 23px),
        radial-gradient(circle at 1380px 38px, #246340 24px, transparent 25px),
        radial-gradient(circle at 1855px 50px, #246340 18px, transparent 19px),
        radial-gradient(ellipse at 1810px 20px, #217346 60px, transparent 61px),
        linear-gradient(90deg, transparent 1430px, #246340 1450px, #246340 1860px, #226c43 1900px),
        #217346;
}
.titlebar .tip {
    top: auto;
    bottom: -13px;
}
.autosave {
    display: flex;
    align-items: center;
    gap: 8px;
    margin-left: 28px;
    height: 20px;
    font-size: 14px;
}
.titlebar .tip-autosave {
    left: 58px;
}
.switch {
    display: flex;
    align-items: center;
    gap: 8px;
    height: 20px;
    padding: 0 5px;
    border: 1px solid #fff;
    border-radius: 10px;
    font-size: 13px;
}
.switch input {
    appearance: none;
    width: 10px;
    height: 10px;
    border-radius: 50%;
    background: #fff;
}
.quick {
    display: flex;
    align-items: center;
    margin-left: 18px;
}
.quick .undo {
    margin-left: 16px;
}
.quick .redo {
    margin-left: 8px;
}
.quick .undo .tip {
    left: 15px;
}
.mini {
    width: 20px;
}
.customize {
    margin-left: 12px;
}
.doc-title {
    margin: 0 0 4px 47px;
    font-size: 14px;
    font-weight: normal;
    white-space: nowrap;
}
.search {
    display: flex;
    align-items: center;
    gap: 16px;
    flex: 0 1 458px;
    height: 29px;
    margin-left: 52px;
    padding: 0 22px;
    color: #185c37;
    background: #a0cdb4;
}
.search input {
    flex: 1;
    min-width: 0;
}
.search input::placeholder {
    color: #185c37;
}
.titlebar .tip-search {
    left: 52%;
    bottom: -8px;
}
.account {
    display: flex;
    align-items: center;
    margin-left: auto;
}
.user {
    margin: 0 13px 0 12px;
}
.avatar {
    width: 30px;
    line-height: 30px;
    border-radius: 50%;
    text-align: center;
    font-size: 12px;
    background: #6b7780;
}
.window-buttons {
    display: flex;
    margin-left: 14px;
}
.window-buttons button {
    width: 57px;
    height: 43px;
}

/* ribbon tabs */
.tabs {
    display: flex;
    height: 36px;
    flex: none;
    padding-left: 7px;
    font-size: 16px;
    background: #f3f2f1;
}
.tabs > button {
    padding: 2px 14px 0;
}
.tabs > .file {
    margin-right: 8px;
}
.tabs > .active {
    padding-top: 6px;
    border-bottom: 4px solid #217346;
    font-weight: 600;
    color: #252423;
    background: #faf9f8;
}
.tab-actions {
    display: flex;
    gap: 10px;
    margin: 4px 15px 0 auto;
}
.tab-actions button {
    gap: 4px;
    height: 30px;
    padding: 0 8px;
    border: 1px solid #e1dfdd;
    border-radius: 3px;
    font-weight: 600;
    color: #217346;
    background: #fff;
}
.tab-actions .tip {
    left: 58%;
    top: 14px;
}

/* ribbon */
.ribbon {
    display: flex;
    flex: none;
    height: 121px;
    padding: 7px 0 4px;
    background: #f3f2f1;
    position: relative;
    box-shadow: 0 1px 8px rgba(0, 0, 0, 0.25);
}
.group {
    display: flex;
    flex-direction: column;
    flex: none;
    border-right: 1px solid #b3b0ad;
}
.group-body {
    display: flex;
    flex: 1;
}
.group-label {
    position: relative;
    line-height: 10px;
    font-size: 12px;
    text-align: center;
}
.has-launch {
    padding-right: 22px;
}
.launch {
    position: absolute;
    right: 4px;
    bottom: 0;
}
.g-clipboard { width: 205px; }
.g-font { width: 282px; }
.g-align { width: 343px; }
.g-number { width: 189px; }
.g-styles { width: 238px; }
.g-cells { width: 176px; }
.g-editing { width: 249px; }
.g-ideas { width: 72px; }
.g-sens { width: 91px; }
.g-clipboard .group-body,
.g-styles .group-body,
.g-cells .group-body {
    padding-left: 9px;
}
.g-font .group-body,
.g-align .group-body,
.g-number .group-body {
    padding-left: 10px;
}
.g-editing .group-body {
    padding-left: 14px;
}
.big {
    flex-direction: column;
    justify-content: flex-start;
    width: 100%;
    line-height: 20px;
}
.big > .chev {
    margin-top: 3px;
}
.big > span {
    display: flex;
    align-items: center;
    gap: 5px;
}
.big > .big-icon {
    height: 45px;
}
.big:disabled {
    color: #b1b0af;
}
.w-paste, .w-cell { width: 54px; }
.w-cells { width: 52px; }
.w-cond { width: 92px; }
.w-table { width: 72px; }
.small-list {
    margin-top: -1px;
    padding-left: 4px;
}
.small-list button {
    gap: 4px;
    height: 30px;
}
.small-list .far {
    margin-left: 10px;
}
.small-list.edit-list {
    width: 111px;
    margin-top: -2px;
    padding-left: 0;
}
.edit-list button {
    height: 29px;
}
.group-body.rows, .rows {
    display: flex;
    flex-direction: column;
    gap: 11px;
    padding-top: 10px;
}
.row {
    display: flex;
    height: 29px;
}
.ib {
    width: 28px;
}
.drop {
    width: 18px;
}
.drop.narrow {
    width: 10px;
}
.on {
    background: #c8c6c4;
}
.vsep {
    width: 1px;
    margin: 0 4px 0 5px;
    background: #d2d0ce;
}
.vsep.tight {
    margin: 0 4px;
}
.vsep.long {
    margin: 7px 5px 18px;
}
.g-align .rows:first-child .row {
    width: 149px;
}
.labelled {
    gap: 4px;
    padding: 0 8px 0 4px;
    color: #252423;
}
.labelled .chev {
    margin-left: 10px;
}
.glyph {
    font-size: 16px;
}
.glyph i {
    font-family: "Liberation Serif", serif;
    font-size: 18px;
}
.sign {
    font-size: 21px;
}
.icon-text {
    font-size: 12px;
    fill: #444;
}
.icon-text.large {
    font-size: 14px;
}
.combo {
    position: relative;
    display: flex;
}
.combo select {
    appearance: none;
    width: 100%;
    padding-left: 2px;
    border: 1px solid #c8c6c4;
    color: #252423;
    background: #fff;
}
.combo .chev {
    position: absolute;
    right: 2px;
    top: 10px;
}
.font-name { width: 144px; }
.font-size { width: 62px; }
.number-format { width: 168px; }
.collapse {
    margin-left: auto;
    padding-right: 12px;
    align-items: flex-end;
}

/* formula bar */
.formula-bar {
    display: flex;
    flex: none;
    height: 55px;
    padding: 13px 6px 12px;
    align-items: center;
}
.name-box, .fx-buttons, .formula {
    display: flex;
    align-items: center;
    height: 30px;
    border: 1px solid #c6c6c6;
    background: #fdfdfd;
}
.name-box {
    width: 127px;
    padding: 0 8px 0 7px;
}
.name-box input, .formula input {
    flex: 1;
    min-width: 0;
}
.grip {
    width: 3px;
    height: 13px;
    background: repeating-linear-gradient(#b5b5b5 0 3px, transparent 3px 5px);
}
.formula-bar .grip {
    margin: 0 17px;
}
.fx-buttons {
    width: 137px;
    margin-right: 3px;
}
.fx-buttons button {
    flex: 1;
}
.fx {
    font-family: "Liberation Serif", serif;
    font-size: 20px;
    font-style: italic;
    font-weight: bold;
    color: #666;
}
.formula {
    flex: 1;
    padding: 0 4px 0 13px;
    font-size: 16px;
}

/* worksheet */
.sheet {
    display: flex;
    flex: 1;
    min-height: 0;
    padding-right: 3px;
    gap: 3px;
}
.grid {
    flex: 1;
    min-width: 0;
    overflow: hidden;
}
table {
    width: 100%;
    table-layout: fixed;
    border-collapse: separate;
    border-spacing: 0;
    font-family: "Liberation Sans", Arial, sans-serif;
    font-size: 27px;
    font-kerning: none;
    color: #000;
}
.c-head { width: 68px; }
.c-a { width: 42px; }
.c-b { width: 472px; }
.c-c { width: 669px; }
.c-d { width: 24px; }
.c-f { width: 6px; }
.c-g { width: 37px; }
th, td {
    height: 41px;
    padding: 0;
    line-height: 36px;
    white-space: nowrap;
}
th {
    font-size: 34px;
    font-weight: normal;
    background: #e6e6e6;
}
thead th {
    height: 42px;
    overflow: hidden;
    border-bottom: 1px solid #999;
}
thead .sel {
    border-right: 1px solid #b0b0b0;
    color: #1c5f3a;
    background: #d2d2d2;
}
thead .cut {
    text-align: left;
}
thead th:last-child {
    padding-left: 4px;
}
.corner {
    border-right: 1px solid #b0b0b0;
}
.corner svg {
    margin: 4px 3px 0 auto;
}
tbody th {
    padding-bottom: 2px;
    border-right: 1px solid #999;
    border-bottom: 1px solid #aaa;
}
td {
    padding: 0 0 5px 5px;
    background: #fff;
}
td:last-child {
    border-right: 1px solid #999;
}
.current th {
    border-right: 2px solid #217346;
    color: #1c5f3a;
    background: #d2d2d2;
}
.picked {
    position: relative;
}
/* selection frame and fill handle */
.picked::before {
    content: "";
    position: absolute;
    inset: -2px -1px -1px -1px;
    border: 2px solid #217346;
}
.picked::after {
    content: "";
    position: absolute;
    right: -3px;
    bottom: -3px;
    width: 6px;
    height: 6px;
    border: 1px solid #fff;
    border-width: 1px 0 0 1px;
    background: #217346;
}
.vscroll, .hscroll {
    display: flex;
    background: #dadada;
}
.vscroll {
    flex-direction: column;
    width: 19px;
    margin-top: 2px;
}
.vscroll button, .hscroll button, .thumb {
    flex: none;
    width: 19px;
    height: 19px;
    border: 1px solid #ababab;
    background: #fff;
}
.vscroll .thumb {
    height: 42px;
    margin-top: 8px;
}
.down {
    margin-top: auto;
}

/* sheet tabs */
.sheet-bar {
    display: flex;
    flex: none;
    align-items: center;
    height: 30px;
    padding-right: 25px;
    border-top: 1px solid #999;
    border-bottom: 1px solid #c6c6c6;
}
.sheet-nav {
    display: flex;
    justify-content: space-between;
    width: 62px;
    padding-left: 28px;
}
.sheet-tab {
    align-self: flex-start;
    height: 26px;
    margin: -1px 0 0 41px;
    padding: 0 11px 2px;
    border: 1px solid #999;
    border-width: 0 1px 2px;
    border-bottom-color: #217346;
    font-size: 16px;
    font-weight: 600;
    color: #217346;
    background: #fff;
}
.add-sheet {
    margin-left: 33px;
}
.sheet-bar .grip {
    margin: 0 16px 0 auto;
}
.hscroll {
    width: 38.4%;
    height: 19px;
}
.hscroll .thumb {
    width: 71%;
}
.right {
    margin-left: auto;
}

/* status bar */
.status-bar {
    display: flex;
    flex: none;
    align-items: center;
    justify-content: flex-end;
    height: 26px;
    padding-right: 11px;
    background: #f3f2f1;
}
.view {
    width: 50px;
    height: 26px;
}
.zoom-btn {
    width: 22px;
}
.zoom {
    appearance: none;
    width: 126px;
    height: 14px;
    background:
        linear-gradient(#b0b0b0, #b0b0b0) center / 1px 11px no-repeat,
        linear-gradient(#b0b0b0, #b0b0b0) center / 100% 1px no-repeat;
}
.zoom::-webkit-slider-thumb {
    appearance: none;
    width: 6px;
    height: 14px;
    background: #777;
}
.zoom-value {
    margin-left: 9px;
    font-size: 12px;
}

/* windows taskbar */
.taskbar {
    display: flex;
    flex: none;
    height: 50px;
    color: #fff;
    background: #2a3220;
}
.start {
    width: 60px;
}
.task-search {
    display: flex;
    align-items: center;
    gap: 14px;
    flex: 0 1 429px;
    padding: 0 0 2px 14px;
    border: 1px solid #c0c0c0;
    font-size: 17px;
    color: #222;
    background: #f2f2f2;
}
.task-search input {
    flex: 1;
    min-width: 0;
}
.task-search input::placeholder {
    color: #333;
}
.apps {
    display: flex;
}
.apps button {
    width: 62px;
    padding-bottom: 1px;
}
.running {
    background: linear-gradient(#c080ff, #c080ff) bottom / 51px 3px no-repeat;
}
.running.current {
    background: linear-gradient(#c080ff, #c080ff) bottom / 100% 3px no-repeat #565c4e;
}
.app-letter {
    font-size: 13px;
    font-weight: 700;
    text-anchor: middle;
    fill: #fff;
}
.tray {
    display: flex;
    margin-left: auto;
    margin-right: 5px;
    border-right: 1px solid #777;
}
.tray button {
    width: 30px;
}
.clock {
    display: flex;
    flex-direction: column;
    justify-content: center;
    width: 86px;
    line-height: 23px;
    font-size: 14px;
    text-align: center;
}
.tray .notify {
    position: relative;
    width: 59px;
    padding-right: 11px;
}
.badge {
    position: absolute;
    left: 24px;
    top: 25px;
    width: 20px;
    line-height: 18px;
    border: 1px solid #888;
    border-radius: 50%;
    font-size: 12px;
    background: #333;
}
```
